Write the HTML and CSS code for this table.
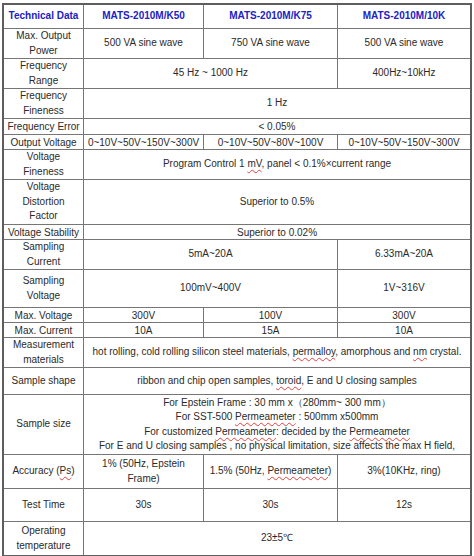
FILE: index.html
```html
<!DOCTYPE html>
<html>
<head>
<meta charset="utf-8">
<link rel="stylesheet" href="styles.css">
</head>
<body>
<table class="spec">
  <colgroup>
    <col class="c1"><col class="c2"><col class="c3"><col class="c4">
  </colgroup>
  <tr class="r24">
    <th>Technical Data</th><th>MATS-2010M/K50</th><th>MATS-2010M/K75</th><th>MATS-2010M/10K</th>
  </tr>
  <tr class="r30">
    <td>Max. Output Power</td><td>500 VA sine wave</td><td>750 VA sine wave</td><td>500 VA sine wave</td>
  </tr>
  <tr class="r30">
    <td>Frequency Range</td><td colspan="2">45 Hz ~ 1000 Hz</td><td>400Hz~10kHz</td>
  </tr>
  <tr class="r30">
    <td>Frequency Fineness</td><td colspan="3">1 Hz</td>
  </tr>
  <tr class="r16 tight">
    <td>Frequency Error</td><td colspan="3">&lt; 0.05%</td>
  </tr>
  <tr class="r15 tight">
    <td>Output Voltage</td><td>0~10V~50V~150V~300V</td><td>0~10V~50V~80V~100V</td><td>0~10V~50V~150V~300V</td>
  </tr>
  <tr class="r29">
    <td>Voltage Fineness</td><td colspan="3">Program Control 1 <span class="sp">mV</span>, panel &lt; 0.1%×current range</td>
  </tr>
  <tr class="r45">
    <td>Voltage<br>Distortion<br>Factor</td><td colspan="3">Superior to 0.5%</td>
  </tr>
  <tr class="r15 tight">
    <td>Voltage Stability</td><td colspan="3">Superior to 0.02%</td>
  </tr>
  <tr class="r30">
    <td>Sampling Current</td><td colspan="2">5mA~20A</td><td>6.33mA~20A</td>
  </tr>
  <tr class="r38">
    <td>Sampling Voltage</td><td colspan="2">100mV~400V</td><td>1V~316V</td>
  </tr>
  <tr class="r15 tight">
    <td>Max. Voltage</td><td>300V</td><td>100V</td><td>300V</td>
  </tr>
  <tr class="r15 tight">
    <td>Max. Current</td><td>10A</td><td>15A</td><td>10A</td>
  </tr>
  <tr class="r30">
    <td>Measurement materials</td><td colspan="3">hot rolling, cold rolling silicon steel materials, <span class="sp">permalloy</span>, amorphous and <span class="sp">nm</span> crystal.</td>
  </tr>
  <tr class="r27">
    <td>Sample shape</td><td colspan="3">ribbon and chip open samples, <span class="sp">toroid</span>, E and U closing samples</td>
  </tr>
  <tr class="r60">
    <td>Sample size</td>
    <td colspan="3">
      <div>For Epstein Frame : 30 mm x（280mm~ 300 mm）</div>
      <div>For SST-500 <span class="sp">Permeameter</span> : 500mm x500mm</div>
      <div>For customized <span class="sp">Permeameter</span>: decided by the <span class="sp">Permeameter</span></div>
      <div>For E and U closing samples , no physical limitation, size affects the max H field,</div>
    </td>
  </tr>
  <tr class="r34">
    <td>Accuracy (<span class="sp">Ps</span>)</td><td class="pad">1% (50Hz, Epstein Frame)</td><td>1.5% (50Hz, <span class="sp">Permeameter</span>)</td><td>3%(10KHz, ring)</td>
  </tr>
  <tr class="r33">
    <td>Test Time</td><td>30s</td><td>30s</td><td>12s</td>
  </tr>
  <tr class="last">
    <td>Operating temperature</td><td colspan="3">23±5℃</td>
  </tr>
</table>
</body>
</html>
```
FILE: styles.css
```css
body {
  margin: 0;
  background: #ffffff;
  font-family: "Liberation Sans", Arial, sans-serif;
  font-size: 10px;
  color: #2a2a2a;
}

.spec {
  margin: 3px 0 0 2px;
  width: 470px;
  table-layout: fixed;
  border: 2px solid #5e5e5e;
  border-spacing: 0;
}

.c1 { width: 80px; }
.c2 { width: 120px; }
.c3 { width: 134px; }
.c4 { width: 132px; }

.spec th,
.spec td {
  padding: 0;
  text-align: center;
  vertical-align: middle;
  line-height: 14.5px;
  border-right: 1px solid #767676;
  border-bottom: 1px solid #767676;
}

.spec td:first-child {
  padding: 0 2px;
}

.spec th:last-child,
.spec td:last-child {
  border-right: 0;
}

.spec tr:last-child td {
  border-bottom: 0;
}

.spec th {
  color: #2121c4;
  font-weight: bold;
}

.spec .tight td {
  line-height: 13px;
}

.spec td.pad {
  padding: 0 6px;
}

.sp {
  text-decoration: underline wavy #e04040;
  text-decoration-thickness: 1px;
  text-underline-offset: 2px;
}

.r24 { height: 24px; }
.r30 { height: 30px; }
.r29 { height: 29px; }
.r16 { height: 16px; }
.r15 { height: 15px; }
.r45 { height: 45px; }
.r38 { height: 38px; }
.r27 { height: 27px; }
.r60 { height: 60px; }
.r34 { height: 34px; }
.r33 { height: 33px; }
.last { height: 33px; }
```
